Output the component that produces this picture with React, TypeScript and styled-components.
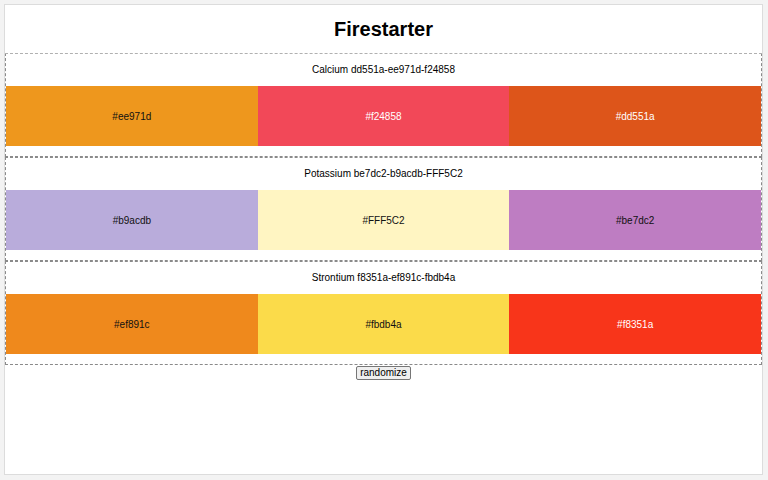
import React, { useState } from 'react';
import styled, { createGlobalStyle } from 'styled-components';

type Palette = { name: string; label: string; colors: string[] };

const initial: Palette[] = [
  { name: 'Calcium', label: 'dd551a-ee971d-f24858', colors: ['ee971d', 'f24858', 'dd551a'] },
  { name: 'Potassium', label: 'be7dc2-b9acdb-FFF5C2', colors: ['b9acdb', 'FFF5C2', 'be7dc2'] },
  { name: 'Strontium', label: 'f8351a-ef891c-fbdb4a', colors: ['ef891c', 'fbdb4a', 'f8351a'] },
];

const isDark = (hex: string) => {
  const r = parseInt(hex.slice(0, 2), 16);
  const g = parseInt(hex.slice(2, 4), 16);
  const b = parseInt(hex.slice(4, 6), 16);
  return 0.299 * r + 0.587 * g + 0.114 * b < 150;
};

const App: React.FC = () => {
  const [palettes, setPalettes] = useState(initial);

  const randomize = () => {
    setPalettes(p => p.map(x => ({ ...x, colors: [...x.colors].sort(() => Math.random() - 0.5) })));
  };

  return (
    <>
      <GlobalStyle />
      <Card>
        <Title>Firestarter</Title>
        {palettes.map(p => (
          <Section key={p.name}>
            <Heading>
              {p.name} {p.label}
            </Heading>
            <SwatchRow>
              {p.colors.map(c => (
                <Swatch key={c} $bg={c} $light={isDark(c)}>
                  #{c}
                </Swatch>
              ))}
            </SwatchRow>
          </Section>
        ))}
        <ButtonRow>
          <Button onClick={randomize}>randomize</Button>
        </ButtonRow>
      </Card>
    </>
  );
};

const GlobalStyle = createGlobalStyle`
  html, body {
    margin: 0;
    padding: 0;
    background: #f3f3f3;
    font-family: "Liberation Sans", Arial, sans-serif;
  }
  body {
    padding: 4px 5px 5px 4px;
  }
`;

const Card = styled.div`
  box-sizing: border-box;
  width: 759px;
  height: 471px;
  background: #fff;
  border: 1px solid #dcdcdc;
`;

const Title = styled.h1`
  margin: 0;
  height: 48px;
  line-height: 48px;
  text-align: center;
  font-size: 20px;
  font-weight: bold;
  color: #000;
`;

const Section = styled.section`
  border: 1px dashed #8a8a8a;
  border-top-color: #b0b0b0;
  padding-bottom: 10px;
  & + & {
    border-top-color: #8a8a8a;
  }
`;

const Heading = styled.div`
  height: 32px;
  line-height: 32px;
  text-align: center;
  font-size: 10px;
  color: #000;
`;

const SwatchRow = styled.div`
  display: grid;
  grid-template-columns: repeat(3, 1fr);
  height: 60px;
`;

const Swatch = styled.div<{ $bg: string; $light: boolean }>`
  background: #${p => p.$bg};
  color: ${p => (p.$light ? '#fff' : '#111')};
  display: flex;
  align-items: center;
  justify-content: center;
  font-size: 10px;
`;

const ButtonRow = styled.div`
  display: flex;
  justify-content: center;
  padding-top: 1px;
`;

const Button = styled.button`
  font-family: "Liberation Sans", Arial, sans-serif;
  font-size: 10px;
  line-height: 10px;
  padding: 1px 3px;
  height: 14px;
  color: #000;
  background: #efefef;
  border: 1px solid #767676;
  border-radius: 2px;
  cursor: pointer;
`;

export default App;
